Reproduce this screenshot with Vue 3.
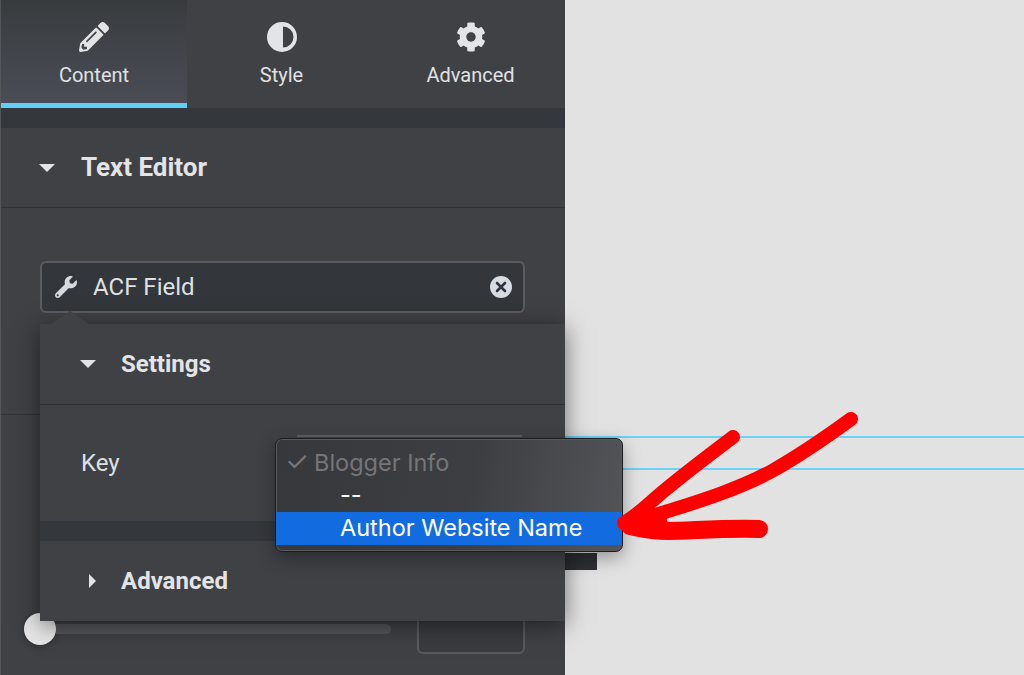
<script setup>
const tabs = [
  { label: 'Content', icon: 'pencil', active: true },
  { label: 'Style', icon: 'half' },
  { label: 'Advanced', icon: 'gear' }
]
</script>

<template>
  <div class="page">
    <aside class="panel">
      <nav class="tabs">
        <div v-for="t in tabs" :key="t.label" class="tab" :class="{ active: t.active }">
          <svg v-if="t.icon === 'pencil'" class="tab-icon" viewBox="0 0 512 512">
            <path fill="#e3e4e6" d="M497.9 142.1l-46.1 46.1c-4.7 4.7-12.3 4.7-17 0l-111-111c-4.7-4.7-4.7-12.3 0-17l46.1-46.1c18.7-18.7 49.1-18.7 67.9 0l60.1 60.1c18.8 18.7 18.8 49.1 0 67.9zM284.2 99.8L21.6 362.4.4 483.9c-2.9 16.4 11.4 30.6 27.8 27.8l121.5-21.3 262.6-262.6c4.7-4.7 4.7-12.3 0-17l-111-111c-4.8-4.7-12.4-4.7-17.1 0zM124.1 339.9c-5.5-5.5-5.5-14.3 0-19.8l154-154c5.5-5.5 14.3-5.5 19.8 0s5.5 14.3 0 19.8l-154 154c-5.5 5.5-14.3 5.5-19.8 0zM88 424h48v36.3l-64.5 11.3-31.1-31.1L51.7 376H88v48z" />
          </svg>
          <svg v-else-if="t.icon === 'half'" class="tab-icon" viewBox="0 0 30 30">
            <path fill="#e3e4e6" fill-rule="evenodd" d="M15 0a15 15 0 1 0 0 30a15 15 0 1 0 0-30zM16 4.5a10.5 10.5 0 0 1 0 21z" />
          </svg>
          <svg v-else class="tab-icon" viewBox="0 0 512 512">
            <path fill="#e3e4e6" d="M487.4 315.7l-42.6-24.6c4.3-23.2 4.3-47 0-70.2l42.6-24.6c4.9-2.8 7.1-8.6 5.5-14-11.1-35.6-30-67.8-54.7-94.6-3.8-4.1-10-5.1-14.8-2.3L380.8 110c-17.9-15.4-38.5-27.3-60.8-35.1V25.8c0-5.6-3.9-10.5-9.4-11.7-36.7-8.2-74.3-7.8-109.2 0-5.5 1.2-9.4 6.1-9.4 11.7V75c-22.2 7.9-42.8 19.8-60.8 35.1L88.7 85.5c-4.9-2.8-11-1.9-14.8 2.3-24.7 26.7-43.6 58.9-54.7 94.6-1.7 5.4.6 11.2 5.5 14L67.3 221c-4.3 23.2-4.3 47 0 70.2l-42.6 24.6c-4.9 2.8-7.1 8.6-5.5 14 11.1 35.6 30 67.8 54.7 94.6 3.8 4.1 10 5.1 14.8 2.3l42.6-24.6c17.9 15.4 38.5 27.3 60.8 35.1v49.2c0 5.6 3.9 10.5 9.4 11.7 36.7 8.2 74.3 7.8 109.2 0 5.5-1.2 9.4-6.1 9.4-11.7v-49.2c22.2-7.9 42.8-19.8 60.8-35.1l42.6 24.6c4.9 2.8 11 1.9 14.8-2.3 24.7-26.7 43.6-58.9 54.7-94.6 1.5-5.5-.7-11.3-5.6-14.1zM256 336c-44.1 0-80-35.9-80-80s35.9-80 80-80 80 35.9 80 80-35.9 80-80 80z" />
          </svg>
          <span class="tab-label">{{ t.label }}</span>
        </div>
      </nav>
      <div class="band"></div>
      <header class="sec-head">
        <span class="caret-down"></span>
        <span class="sec-title big">Text Editor</span>
      </header>
      <section class="sec-body">
        <div class="dyn-input">
          <svg class="wrench" viewBox="0 0 512 512">
            <path fill="#d5dae0" d="M507.73 109.1c-2.24-9.03-13.54-12.09-20.12-5.51l-74.36 74.36-67.88-11.31-11.31-67.88 74.36-74.36c6.62-6.62 3.43-17.9-5.66-20.16-47.38-11.74-99.55.91-136.58 37.93-39.64 39.64-50.55 97.1-34.05 147.2L18.74 402.76c-24.99 24.99-24.99 65.51 0 90.5 24.99 24.99 65.51 24.99 90.5 0l213.21-213.21c50.12 16.71 107.47 5.68 147.37-34.22 37.07-37.07 49.7-89.32 37.91-136.73zM64 472c-13.25 0-24-10.75-24-24 0-13.26 10.75-24 24-24s24 10.74 24 24c0 13.25-10.75 24-24 24z" />
          </svg>
          <span class="dyn-text">ACF Field</span>
          <svg class="clear" viewBox="0 0 22 22">
            <circle cx="11" cy="11" r="11" fill="#d5dce3" />
            <path d="M7 7l8 8M15 7l-8 8" stroke="#33363a" stroke-width="2.6" stroke-linecap="round" fill="none" />
          </svg>
        </div>
      </section>
      <div class="slider-row">
        <div class="slider">
          <span class="knob"></span>
          <span class="track"></span>
        </div>
        <div class="num-box"></div>
      </div>

      <div class="popover">
        <span class="pop-arrow"></span>
        <header class="pop-head">
          <span class="caret-down small"></span>
          <span class="sec-title">Settings</span>
        </header>
        <div class="key-row">
          <span class="key-label">Key</span>
          <span class="select-under"></span>
        </div>
        <div class="pop-band"></div>
        <header class="pop-adv">
          <span class="caret-right"></span>
          <span class="sec-title">Advanced</span>
        </header>
      </div>
    </aside>

    <main class="canvas">
      <div class="guides"></div>
      <div class="stub"></div>
    </main>

    <div class="menu">
      <div class="opt disabled"><span class="check">✓</span>Blogger Info</div>
      <div class="opt">--</div>
      <div class="opt selected">Author Website Name</div>
    </div>

    <svg class="scribble" viewBox="0 0 1024 675" width="1024" height="675">
      <g fill="none" stroke="#fe0000" stroke-linecap="round" stroke-linejoin="round">
        <path stroke-width="14" d="M733 437C700 462 668 486 650 503C640 512 632 518 624 523" />
        <path stroke-width="14" d="M851 419C825 438 795 458 772 471C735 491 690 504 662 513C648 517 634 520 624 523" />
        <path stroke-width="18" d="M759 529C720 528 690 531 668 531C652 531 640 528 630 526" />
        <path stroke-width="8" fill="#fe0000" d="M622 523L660 511L664 524L640 530Z" />
      </g>
    </svg>
  </div>
</template>

<style>
html, body { margin: 0; padding: 0; background: #e2e2e2; }
</style>

<style scoped>
.page {
  position: relative;
  display: flex;
  width: 1024px;
  height: 675px;
  overflow: hidden;
  font-family: Roboto, "Liberation Sans", sans-serif;
}
.panel {
  position: relative;
  flex: none;
  box-sizing: border-box;
  width: 565px;
  height: 675px;
  background: #404145;
  border-left: 1px solid #55565a;
  color: #e3e4e6;
}
.tabs {
  display: grid;
  grid-template-columns: 186px 189px 189px;
  height: 108px;
}
.tab {
  box-sizing: border-box;
  display: flex;
  flex-direction: column;
  align-items: center;
  padding-top: 22px;
}
.tab.active {
  background: linear-gradient(#383b3e, #4a4d55);
  border-bottom: 5px solid #62d0f4;
}
.tab-icon { width: 30px; height: 30px; display: block; }
.tab-label { margin-top: 11px; font-size: 20px; line-height: 24px; color: #e0e1e3; }
.band { height: 20px; background: #34373b; }
.sec-head {
  box-sizing: border-box;
  height: 80px;
  display: flex;
  align-items: center;
  border-bottom: 1px solid #303236;
  padding-left: 38px;
}
.caret-down {
  width: 0; height: 0;
  border-left: 8px solid transparent;
  border-right: 8px solid transparent;
  border-top: 8px solid #e3e4e6;
  margin-right: 26px;
}
.caret-down.small { margin-right: 25px; }
.caret-right {
  width: 0; height: 0;
  border-top: 7px solid transparent;
  border-bottom: 7px solid transparent;
  border-left: 7px solid #e3e4e6;
  margin-right: 25px;
}
.sec-title { font-weight: 700; font-size: 24px; line-height: 30px; color: #e3e4e6; }
.sec-title.big { font-size: 26px; margin-bottom: 2px; }
.sec-body {
  box-sizing: border-box;
  height: 207px;
  padding: 53px 40px 0 39px;
  border-bottom: 1px solid #303236;
}
.dyn-input {
  box-sizing: border-box;
  height: 52px;
  display: flex;
  align-items: center;
  padding: 0 11px 0 13px;
  background: #33363a;
  border: 2px solid #5a5c60;
  border-radius: 6px;
}
.wrench { width: 22px; height: 22px; flex: none; margin-right: 16px; }
.dyn-text { flex: 1; font-size: 24px; color: #dfe0e2; }
.clear { width: 22px; height: 22px; flex: none; }
.slider-row {
  display: flex;
  align-items: flex-start;
  padding: 197px 40px 0 23px;
}
.slider {
  display: flex;
  align-items: center;
  width: 367px;
  height: 33px;
}
.knob {
  flex: none;
  width: 32px;
  height: 32px;
  border-radius: 50%;
  background: #e6e6e6;
  box-shadow: 0 1px 6px rgba(0, 0, 0, .35);
}
.track { flex: 1; height: 10px; background: #55565b; border-radius: 0 5px 5px 0; }
.num-box {
  box-sizing: border-box;
  width: 108px;
  height: 42px;
  margin-left: 26px;
  background: #393b3f;
  border: 2px solid #585a5e;
  border-radius: 6px;
}
.popover {
  position: absolute;
  left: 39px;
  top: 324px;
  width: 525px;
  height: 297px;
  background: #404145;
  box-shadow: 0 4px 22px rgba(0, 0, 0, .5);
  z-index: 2;
}
.pop-arrow {
  position: absolute;
  left: 11px;
  top: -13px;
  width: 0; height: 0;
  border-left: 19px solid transparent;
  border-right: 19px solid transparent;
  border-bottom: 13px solid #404145;
}
.pop-head {
  box-sizing: border-box;
  height: 81px;
  display: flex;
  align-items: center;
  padding-left: 40px;
  border-bottom: 1px solid #303236;
}
.key-row {
  position: relative;
  height: 116px;
  display: flex;
  padding-left: 41px;
}
.key-label { margin-top: 44px; font-size: 24px; line-height: 28px; color: #dfe0e2; }
.select-under {
  position: absolute;
  left: 257px;
  top: 30px;
  width: 225px;
  height: 50px;
  box-sizing: border-box;
  border-top: 2px solid #5d5f63;
}
.pop-band { height: 20px; background: #34373b; }
.pop-adv {
  height: 80px;
  display: flex;
  align-items: center;
  padding-left: 49px;
}
.canvas {
  position: relative;
  flex: 1;
  background: #e2e2e2;
  padding-top: 436px;
}
.guides {
  box-sizing: border-box;
  height: 34px;
  border-top: 2px solid #6dd3f6;
  border-bottom: 2px solid #6dd3f6;
}
.stub {
  position: absolute;
  left: 0;
  top: 553px;
  width: 32px;
  height: 17px;
  background: #2f3034;
}
.menu {
  position: absolute;
  left: 275px;
  top: 438px;
  box-sizing: border-box;
  width: 348px;
  height: 114px;
  padding: 7px 0;
  background: linear-gradient(100deg, #37383b 0%, #3d3e41 55%, #54555a 100%);
  border: 1px solid #1c1d1f;
  box-shadow: inset 0 0 0 1px #58595c, 0 6px 18px rgba(0, 0, 0, .35);
  border-radius: 7px;
  z-index: 3;
  font-family: Inter, "Liberation Sans", sans-serif;
  font-size: 23.5px;
  color: #fff;
  overflow: hidden;
}
.opt {
  position: relative;
  box-sizing: border-box;
  height: 33px;
  line-height: 31px;
  padding-left: 64px;
  white-space: nowrap;
}
.opt.disabled { padding-left: 38px; color: #75767a; }
.check { display: inline-block; width: 29px; margin-left: -29px; font-size: 27px; }
.opt.selected { background: #136cdf; }
.scribble {
  position: absolute;
  left: 0;
  top: 0;
  z-index: 4;
  pointer-events: none;
}
</style>
